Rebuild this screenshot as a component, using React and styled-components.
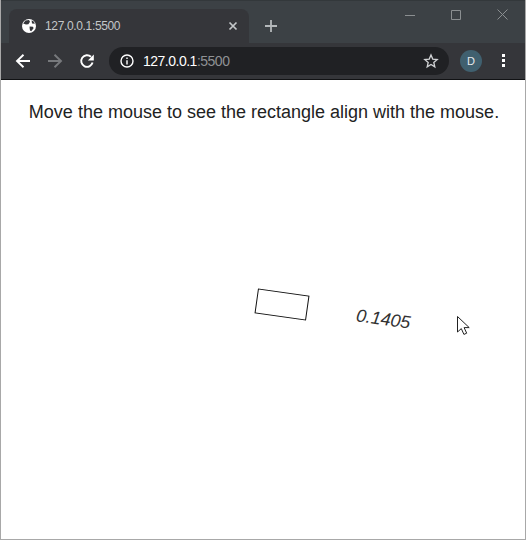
import React from "react";
import styled, { createGlobalStyle } from "styled-components";

const Global = createGlobalStyle`
  html, body { margin: 0; padding: 0; background: #fff; overflow: hidden; }
  #root { width: 526px; height: 540px; }
`;

const Win = styled.div`
  width: 526px;
  height: 540px;
  box-sizing: border-box;
  display: flex;
  flex-direction: column;
  border: 1px solid #a8a8a8;
  border-top: none;
  font-family: "Liberation Sans", Arial, sans-serif;
  background: #fff;
`;

const TitleBar = styled.div`
  height: 43px;
  flex: none;
  background: #3c4145;
  border-top: 1px solid #33383b;
  box-sizing: border-box;
  display: flex;
  align-items: flex-end;
  padding-left: 8px;
`;

const Tab = styled.div`
  width: 240px;
  height: 34px;
  box-sizing: border-box;
  background: #35363a;
  border-radius: 8px 8px 0 0;
  display: flex;
  align-items: center;
  padding: 0 11px 0 13px;
  color: #c4c7c9;
  font-size: 12px;
  letter-spacing: -0.35px;
  gap: 9px;
`;

const TabTitle = styled.span`
  flex: 1;
`;

const NewTab = styled.div`
  width: 16px;
  height: 16px;
  margin: 0 0 8px 15px;
  display: flex;
`;

const WinControls = styled.div`
  margin-left: auto;
  align-self: flex-start;
  display: flex;
  align-items: center;
  padding: 8px 17px 0 0;
  gap: 36px;
`;

const Toolbar = styled.div`
  height: 37px;
  flex: none;
  background: #35363a;
  border-bottom: 1px solid #111214;
  box-sizing: border-box;
  display: flex;
  align-items: center;
  padding: 0 14px 1px 14px;
`;

const NavIcons = styled.div`
  display: flex;
  align-items: center;
  gap: 16px;
  margin-right: 14px;
`;

const Omnibox = styled.div`
  width: 340px;
  height: 28px;
  background: #202124;
  border-radius: 14px;
  display: flex;
  align-items: center;
  box-sizing: border-box;
  padding: 0 10px 0 11px;
  font-size: 14px;
  letter-spacing: -0.5px;
  color: #fff;
  gap: 9px;
`;

const Url = styled.span`
  flex: 1;
`;

const Port = styled.span`
  color: #8f9194;
`;

const Avatar = styled.div`
  width: 22px;
  height: 22px;
  border-radius: 50%;
  background: #40606f;
  color: #e8eaed;
  font-size: 11px;
  display: flex;
  align-items: center;
  justify-content: center;
  margin-left: 11px;
`;

const Menu = styled.div`
  display: flex;
  flex-direction: column;
  gap: 2px;
  margin-left: 20px;
`;

const Dot = styled.span`
  width: 3px;
  height: 3px;
  background: #fff;
`;

const Page = styled.main`
  flex: 1;
  position: relative;
  background: #fff;
  color: #222;
`;

const Heading = styled.p`
  margin: 0;
  padding: 22px 0 0 2px;
  text-align: center;
  font-size: 18px;
  line-height: 21px;
  color: #222;
`;

const Rect = styled.div`
  position: absolute;
  left: 255px;
  top: 212px;
  width: 52px;
  height: 25px;
  box-sizing: border-box;
  border: 1px solid #111;
  transform: rotate(8.05deg);
`;

const Angle = styled.span`
  position: absolute;
  left: 355px;
  top: 229px;
  font-size: 18px;
  line-height: 21px;
  letter-spacing: -0.1px;
  font-style: italic;
  color: #333;
  transform: rotate(8.05deg);
`;

const Cursor = styled.svg`
  position: absolute;
  left: 455px;
  top: 235px;
`;

const Globe = () => (
  <svg width="14" height="14" viewBox="0 0 14 14">
    <circle cx="7" cy="7" r="7" fill="#fff" />
    <path d="M3.4 1.6L7 1l1 1.8-1.6 2.4L4 5.6 1.2 4.4zM7.6 7.4l3.4.4.6 1.4-2.4 3-1.2-.6-.4-2.6zM9.6 1.2l2.4 1.6.8 2-2.8-.4z" fill="#35363a" />
  </svg>
);

const CloseX = () => (
  <svg width="10" height="10" viewBox="0 0 10 10">
    <path d="M1.5 1.5l7 7M8.5 1.5l-7 7" stroke="#c4c7c9" strokeWidth="1.7" />
  </svg>
);

const Plus = () => (
  <svg width="14" height="14" viewBox="0 0 14 14">
    <path d="M7 1v12M1 7h12" stroke="#b4b8ba" strokeWidth="1.8" />
  </svg>
);

const Arrow = ({ color, flip }) => (
  <svg width="16" height="16" viewBox="0 0 16 16" style={flip ? { transform: "scaleX(-1)" } : undefined}>
    <path d="M15 8H2.5M8.5 1.7L2 8l6.5 6.3" fill="none" stroke={color} strokeWidth="1.9" />
  </svg>
);

const Reload = () => (
  <svg width="16" height="16" viewBox="0 0 16 16">
    <path d="M13.6 9.6A5.8 5.8 0 1 1 12 3.8" fill="none" stroke="#fff" strokeWidth="1.9" />
    <path d="M14.8 1.6v6h-6z" fill="#fff" />
  </svg>
);

const Info = () => (
  <svg width="14" height="14" viewBox="0 0 14 14">
    <circle cx="7" cy="7" r="6" fill="none" stroke="#fff" strokeWidth="1.4" />
    <path d="M6.3 6.2h1.4v4.2H6.3zM6.3 3.6h1.4V5H6.3z" fill="#fff" />
  </svg>
);

const Star = () => (
  <svg width="16" height="16" viewBox="0 0 16 16">
    <path d="M8 2l1.75 4.1 4.45.4-3.4 2.9 1 4.4L8 11.5l-3.8 2.3 1-4.4-3.4-2.9 4.45-.4z" fill="none" stroke="#d2d4d6" strokeWidth="1.3" />
  </svg>
);

const App = () => (
  <>
    <Global />
    <Win>
      <TitleBar>
        <Tab>
          <Globe />
          <TabTitle>127.0.0.1:5500</TabTitle>
          <CloseX />
        </Tab>
        <NewTab><Plus /></NewTab>
        <WinControls>
          <svg width="10" height="10" viewBox="0 0 10 10"><path d="M0 5.5h10" stroke="#8b8f91" /></svg>
          <svg width="10" height="10" viewBox="0 0 10 10"><path d="M.5.5h9v9h-9z" fill="none" stroke="#8b8f91" /></svg>
          <svg width="11" height="11" viewBox="0 0 11 11"><path d="M.5.5l10 10M10.5.5l-10 10" stroke="#8b8f91" /></svg>
        </WinControls>
      </TitleBar>
      <Toolbar>
        <NavIcons>
          <Arrow color="#fff" />
          <Arrow color="#77797c" flip />
          <Reload />
        </NavIcons>
        <Omnibox>
          <Info />
          <Url>127.0.0.1<Port>:5500</Port></Url>
          <Star />
        </Omnibox>
        <Avatar>D</Avatar>
        <Menu><Dot /><Dot /><Dot /></Menu>
      </Toolbar>
      <Page>
        <Heading>Move the mouse to see the rectangle align with the mouse.</Heading>
        <Rect />
        <Angle>0.1405</Angle>
        <Cursor width="15" height="21" viewBox="0 0 15 21">
          <path d="M1.5 1.5v15.5l3.8-3.4 2.6 5.8 2.8-1.2-2.6-5.6h5.1z" fill="#fff" stroke="#222" strokeWidth="1" />
        </Cursor>
      </Page>
    </Win>
  </>
);

export default App;
